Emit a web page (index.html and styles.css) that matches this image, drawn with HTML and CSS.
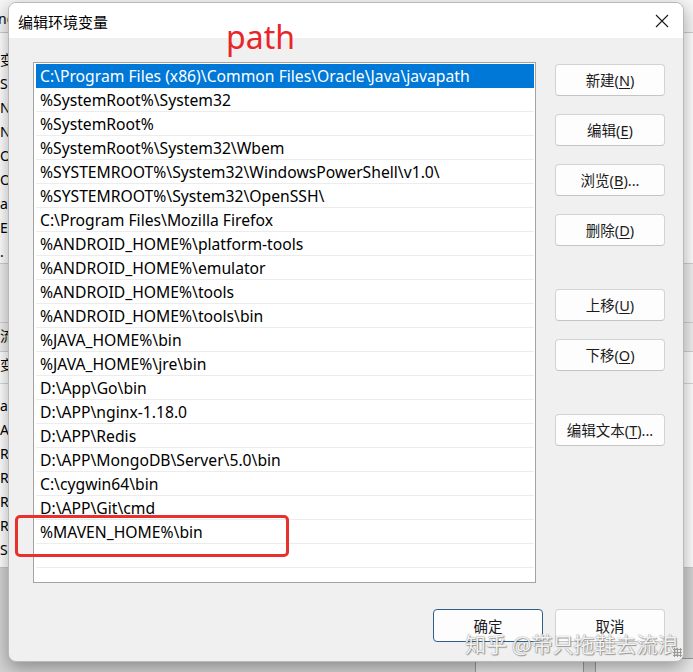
FILE: index.html
```html
<!DOCTYPE html>
<html lang="zh-CN">
<head>
<meta charset="utf-8">
<title>编辑环境变量</title>
<link rel="stylesheet" href="styles.css">
</head>
<body>
<div class="desktop">
  <div class="bgwin">
    <div class="bg-head"><span class="bg-cut">ne</span></div>
    <div class="bg-list1">
      <div class="bg-row">变</div>
      <div class="bg-row">SC</div>
      <div class="bg-row">N\</div>
      <div class="bg-row">N\</div>
      <div class="bg-row">Or</div>
      <div class="bg-row">Or</div>
      <div class="bg-row">a</div>
      <div class="bg-row">E</div>
      <div class="bg-row">.</div>
    </div>
    <div class="bg-gap"></div>
    <div class="bg-sect">流</div>
    <div class="bg-colhead">变</div>
    <div class="bg-list2">
      <div class="bg-row">a</div>
      <div class="bg-row">A</div>
      <div class="bg-row">R</div>
      <div class="bg-row">R</div>
      <div class="bg-row">R</div>
      <div class="bg-row">R</div>
      <div class="bg-row">S</div>
    </div>
    <div class="bg-foot">
      <span class="bg-btn bg-btn1"></span>
      <span class="bg-btn bg-btn2"></span>
    </div>
  </div>

  <div class="dialog">
    <div class="titlebar">
      <span class="title">编辑环境变量</span>
      <span class="close">
        <svg width="14" height="14" viewBox="0 0 14 14"><path d="M1 1 L13 13 M13 1 L1 13" stroke="#1a1a1a" stroke-width="1.1" fill="none"/></svg>
      </span>
    </div>
    <div class="body">
      <div class="main">
        <div class="listbox">
          <div class="row selected">C:\Program Files (x86)\Common Files\Oracle\Java\javapath</div>
          <div class="row">%SystemRoot%\System32</div>
          <div class="row">%SystemRoot%</div>
          <div class="row">%SystemRoot%\System32\Wbem</div>
          <div class="row">%SYSTEMROOT%\System32\WindowsPowerShell\v1.0\</div>
          <div class="row">%SYSTEMROOT%\System32\OpenSSH\</div>
          <div class="row">C:\Program Files\Mozilla Firefox</div>
          <div class="row">%ANDROID_HOME%\platform-tools</div>
          <div class="row">%ANDROID_HOME%\emulator</div>
          <div class="row">%ANDROID_HOME%\tools</div>
          <div class="row">%ANDROID_HOME%\tools\bin</div>
          <div class="row">%JAVA_HOME%\bin</div>
          <div class="row">%JAVA_HOME%\jre\bin</div>
          <div class="row">D:\App\Go\bin</div>
          <div class="row">D:\APP\nginx-1.18.0</div>
          <div class="row">D:\APP\Redis</div>
          <div class="row">D:\APP\MongoDB\Server\5.0\bin</div>
          <div class="row">C:\cygwin64\bin</div>
          <div class="row">D:\APP\Git\cmd</div>
          <div class="row">%MAVEN_HOME%\bin</div>
          <div class="row"></div>
          <div class="row"></div>
        </div>
        <div class="side">
          <button class="btn">新建(<u>N</u>)</button>
          <button class="btn">编辑(<u>E</u>)</button>
          <button class="btn">浏览(<u>B</u>)...</button>
          <button class="btn">删除(<u>D</u>)</button>
          <button class="btn sep">上移(<u>U</u>)</button>
          <button class="btn">下移(<u>O</u>)</button>
          <button class="btn sep">编辑文本(<u>T</u>)...</button>
        </div>
      </div>
      <div class="footer">
        <button class="btn default">确定</button>
        <button class="btn">取消</button>
      </div>
    </div>
  </div>

  <div class="annot-path">path</div>
  <div class="annot-box"></div>
  <div class="watermark">知乎 @带只拖鞋去流浪</div>
  <div class="grip"></div>
</div>
</body>
</html>
```

FILE: styles.css
```css
* { box-sizing: border-box; }

html, body {
  margin: 0;
  padding: 0;
}

body {
  width: 693px;
  height: 672px;
  overflow: hidden;
  font-family: "Noto Sans", "Noto Sans CJK SC", sans-serif;
  color: #000;
}

.desktop {
  position: relative;
  width: 693px;
  height: 672px;
  overflow: hidden;
  background: #e4e4e4;
}

/* ---------- background window ---------- */
.bgwin {
  position: absolute;
  left: 0;
  top: 0;
  width: 693px;
  height: 672px;
  background: #f0f0f0;
  font-size: 14px;
  display: flex;
  flex-direction: column;
}

.bg-head {
  height: 33px;
  background: #f6f6f6;
  border-bottom: 1px solid #cdcdcd;
  line-height: 38px;
}

.bg-cut { margin-left: -2px; }

.bg-list1 {
  background: #fff;
  padding-top: 15px;
  height: 231px;
  border-bottom: 1px solid #d0d0d0;
}

.bg-row {
  height: 24px;
  line-height: 24px;
  white-space: nowrap;
}

.bg-gap { height: 58px; }

.bg-sect {
  height: 30px;
  line-height: 26px;
  border-top: 1px solid #d0d0d0;
  border-bottom: 1px solid #d0d0d0;
  white-space: nowrap;
}

.bg-colhead {
  height: 32px;
  line-height: 26px;
  background: #fff;
  border-bottom: 1px solid #d8d8d8;
}

.bg-list2 {
  background: #fff;
  height: 184px;
  padding-top: 10px;
  border-bottom: 1px solid #c8c8c8;
}

.bg-foot {
  flex: 1;
  position: relative;
  background: #d4d4d4;
}

.bg-btn {
  position: absolute;
  top: 90px;
  height: 30px;
  border: 1px solid #9a9a9a;
  border-radius: 4px;
  background: #e8e8e8;
}
.bg-btn1 { left: 475px; width: 109px; }
.bg-btn2 { left: 595px; width: 110px; }

/* ---------- dialog ---------- */
.dialog {
  position: absolute;
  left: 8px;
  top: 2px;
  width: 676px;
  height: 660px;
  border-radius: 8px;
  overflow: hidden;
  background: #f0f0f0;
  border: 1px solid #b9b9b9;
  box-shadow: 0 6px 18px rgba(0, 0, 0, 0.35);
  display: flex;
  flex-direction: column;
}

.titlebar {
  height: 35px;
  background: #fff;
  display: flex;
  align-items: center;
  justify-content: space-between;
  padding: 0 14px 0 9px;
}

.title {
  font-family: "Noto Sans CJK SC", sans-serif;
  font-size: 15px;
  color: #000;
  margin-top: 1px;
}

.close {
  display: flex;
  width: 14px;
  height: 14px;
  margin-top: 1px;
}

.body {
  flex: 1;
  display: flex;
  flex-direction: column;
}

.main {
  display: flex;
  padding: 24px 0 0 24px;
}

.listbox {
  width: 503px;
  height: 521px;
  border: 1px solid #a3a3a3;
  background: #fff;
  padding: 1px 1px 0 2px;
  overflow: hidden;
  font-size: 15.7px;
}

.row {
  height: 24px;
  padding: 1px 0 0 4px;
  line-height: 22px;
  border-bottom: 1px solid #ececec;
  white-space: nowrap;
  color: #000;
}

.row.selected {
  background: #0078d7;
  color: #fff;
  border-bottom-color: #0078d7;
}

.side {
  display: flex;
  flex-direction: column;
  gap: 18px;
  margin-left: 19px;
  padding-top: 2px;
}

.btn {
  width: 110px;
  height: 32px;
  padding: 0;
  border: 1px solid #d3d3d3;
  border-bottom-color: #c4c4c4;
  border-radius: 4px;
  background: #fdfdfd;
  font-family: "Noto Sans", "Noto Sans CJK SC", sans-serif;
  font-size: 14.5px;
  color: #1b1b1b;
  line-height: 30px;
  white-space: nowrap;
}

.btn u { text-underline-offset: 2px; }

.btn.sep { margin-top: 25px; }

.footer {
  display: flex;
  justify-content: flex-end;
  gap: 12px;
  padding: 26px 18px 0 0;
}

.footer .btn { height: 33px; }

.btn.default {
  border: 1px solid #2f5f8c;
}

/* ---------- annotations ---------- */
.annot-path {
  position: absolute;
  left: 226px;
  top: 17px;
  font-family: "Noto Sans", sans-serif;
  font-size: 32px;
  line-height: 40px;
  color: #e8262a;
}

.annot-box {
  position: absolute;
  left: 15px;
  top: 515px;
  width: 274px;
  height: 42px;
  border: 3px solid #e8302c;
  border-radius: 5px;
}

.watermark {
  position: absolute;
  left: 465px;
  top: 629px;
  font-family: "Noto Sans CJK SC", sans-serif;
  font-size: 21px;
  line-height: 28px;
  color: rgba(255, 255, 255, 0.92);
  text-shadow: 0 0 1px #6d6d6d, 1px 1px 1px rgba(0, 0, 0, 0.35);
  white-space: nowrap;
}

.grip {
  position: absolute;
  left: 673px;
  top: 648px;
  width: 9px;
  height: 9px;
  background-image: radial-gradient(circle, #9a9a9a 1px, transparent 1.2px);
  background-size: 3px 3px;
}
```
